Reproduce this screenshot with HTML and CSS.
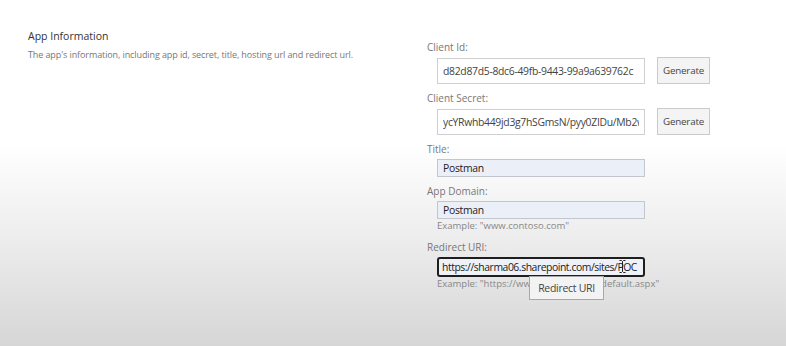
FILE: index.html
```html
<!DOCTYPE html>
<html lang="en">
<head>
    <meta charset="UTF-8">
    <meta name="viewport" content="width=device-width, initial-scale=1.0">
    <title>App Information</title>
    <link rel="stylesheet" href="styles.css">
</head>
<body>

<div class="page">
    <section class="intro">
        <h2>App Information</h2>
        <p>The app's information, including app id, secret, title, hosting url and redirect url.</p>
    </section>

    <section class="fields">
        <div class="field">
            <label>Client Id:</label>
            <div class="row">
                <input class="box" type="text" value="d82d87d5-8dc6-49fb-9443-99a9a639762c" readonly>
                <button class="gen">Generate</button>
            </div>
        </div>

        <div class="field">
            <label>Client Secret:</label>
            <div class="row">
                <input class="box" type="text" value="ycYRwhb449jd3g7hSGmsN/pyy0ZIDu/Mb2wQ=" readonly>
                <button class="gen">Generate</button>
            </div>
        </div>

        <div class="field">
            <label>Title:</label>
            <input class="box filled" type="text" value="Postman">
        </div>

        <div class="field">
            <label>App Domain:</label>
            <input class="box filled" type="text" value="Postman">
            <span class="hint">Example: "www.contoso.com"</span>
        </div>

        <div class="field redirect">
            <label>Redirect URI:</label>
            <input class="box filled focus" type="text" value="https://sharma06.sharepoint.com/sites/POC">
            <span class="hint">Example: "https://www.contoso.com/default.aspx"</span>
            <svg class="ibeam" width="7" height="13" viewBox="0 0 7 13">
                <path d="M0.5 0.5h2l1 1 1-1h2M3.5 1.5v10M0.5 12.5h2l1-1 1 1h2" fill="none" stroke="#222" stroke-width="1"/>
            </svg>
            <div class="tip">Redirect URI</div>
        </div>
    </section>
</div>

</body>
</html>
```

FILE: styles.css
```css
html, body {
    height: 100%;
}
body {
    margin: 0;
    background: linear-gradient(to bottom, #ffffff 0%, #ffffff 42%, #ececec 70%, #d6d6d6 100%);
    font-family: "Open Sans", "Noto Sans", sans-serif;
    color: #444;
}
.page {
    display: flex;
    padding-top: 28px;
}
.intro {
    width: 399px;
    padding-left: 28px;
}
.intro h2 {
    margin: 0;
    font-size: 10.5px;
    font-weight: normal;
    line-height: 16px;
    color: #333;
}
.intro p {
    margin: 5px 0 0;
    font-size: 9px;
    letter-spacing: -0.1px;
    line-height: 12px;
    color: #777;
}
.fields {
    padding-top: 12px;
    width: 300px;
}
.field {
    display: flex;
    flex-direction: column;
    align-items: flex-start;
    margin-bottom: 7px;
}
.field label {
    font-size: 10px;
    line-height: 14px;
    color: #777;
    margin-bottom: 3px;
}
.row {
    display: flex;
    align-items: center;
    gap: 12px;
    margin-left: 10px;
}
.box {
    box-sizing: border-box;
    width: 208px;
    height: 26px;
    padding: 0 5px;
    border: 1px solid #cfcfcf;
    background: #fff;
    font-family: inherit;
    font-size: 10.4px;
    letter-spacing: -0.3px;
    color: #444;
    outline: none;
}
.field > .box {
    margin-left: 10px;
}
.filled {
    height: 18px;
    background: #ebeff8;
    border-color: #c3c6cc;
    color: #222;
}
.focus {
    height: 20px;
    border: 2px solid #1e1e1e;
    border-radius: 3px;
    padding: 0 3px;
    background: #eef1f8;
    letter-spacing: -0.45px;
}
.gen {
    box-sizing: border-box;
    width: 53px;
    height: 27px;
    border: 1px solid #cacaca;
    background: #f4f4f4;
    font-family: inherit;
    font-size: 9.8px;
    letter-spacing: -0.2px;
    color: #444;
    padding: 0;
}
.hint {
    margin-left: 10px;
    font-size: 9.5px;
    line-height: 14px;
    color: #888;
}
.redirect {
    position: relative;
}
.tip {
    position: absolute;
    left: 102px;
    top: 36px;
    box-sizing: border-box;
    width: 75px;
    height: 24px;
    padding-top: 4px;
    border: 1px solid #a8a8a8;
    background: #f3f3f3;
    font-size: 10.5px;
    letter-spacing: -0.3px;
    line-height: 14px;
    text-align: center;
    color: #444;
}
.ibeam {
    position: absolute;
    left: 192px;
    top: 20px;
}
```
